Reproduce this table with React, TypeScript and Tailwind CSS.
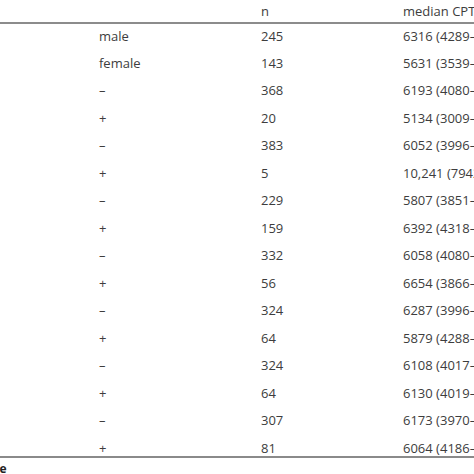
import React from 'react'

// Cropped stats table: group, n, median CPT (IQR)
const rows: [string, string, string][] = [
  ['male', '245', '6316 (4289–8924)'],
  ['female', '143', '5631 (3539–8307)'],
  ['–', '368', '6193 (4080–8743)'],
  ['+', '20', '5134 (3009–7456)'],
  ['–', '383', '6052 (3996–8612)'],
  ['+', '5', '10,241 (7942–12,380)'],
  ['–', '229', '5807 (3851–8367)'],
  ['+', '159', '6392 (4318–9012)'],
  ['–', '332', '6058 (4080–8583)'],
  ['+', '56', '6654 (3866–9201)'],
  ['–', '324', '6287 (3996–8791)'],
  ['+', '64', '5879 (4288–8305)'],
  ['–', '324', '6108 (4017–8633)'],
  ['+', '64', '6130 (4019–8712)'],
  ['–', '307', '6173 (3970–8669)'],
  ['+', '81', '6064 (4186–8590)'],
]

export default function App() {
  return (
    <div
      className="w-[474px] h-[474px] overflow-hidden bg-white text-[13px] text-[#3d3d3d]"
      style={{ fontFamily: '"Open Sans", "Noto Sans", sans-serif' }}
    >
      {/* header */}
      <div className="flex h-[22px] leading-[22px] whitespace-nowrap">
        <div className="w-[261px] shrink-0" />
        <div className="w-[142px] shrink-0">n</div>
        <div className="flex-1 overflow-hidden">median CPT (IQR)</div>
      </div>
      <div className="h-[1.5px] bg-[#8c8c8c]" />

      {/* body */}
      <div>
        {rows.map(([g, n, m], i) => (
          <div
            key={i}
            className={
              'flex leading-[24px] whitespace-nowrap ' +
              (i === rows.length - 1 ? 'h-[20px]' : 'h-[27.47px]')
            }
          >
            <div className="w-[99px] shrink-0" />
            <div className="w-[162px] shrink-0">{g}</div>
            <div className="w-[142px] shrink-0">{n}</div>
            <div className="flex-1 overflow-hidden">{m}</div>
          </div>
        ))}
      </div>
      <div className="h-[2px] bg-[#8a8a8a]" />

      {/* caption, clipped at the left */}
      <div className="mt-[3px] ml-[-23px] leading-[16px] font-bold text-[12px] text-[#222] whitespace-nowrap">
        Note
      </div>
    </div>
  )
}
